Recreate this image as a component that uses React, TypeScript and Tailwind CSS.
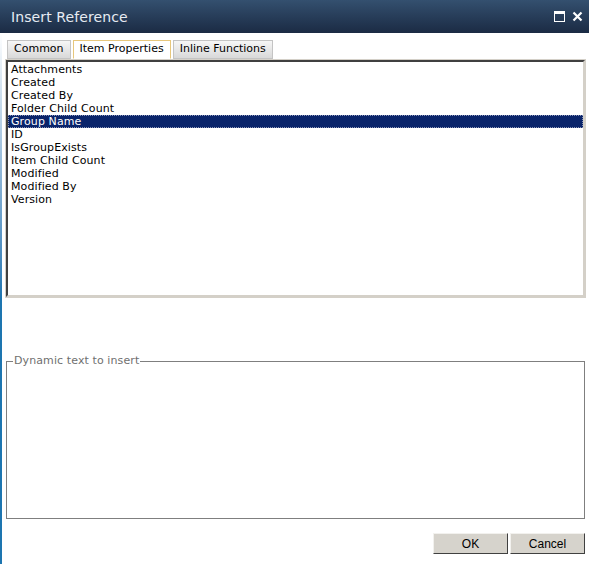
import React from "react";

const fields = [
  "Attachments",
  "Created",
  "Created By",
  "Folder Child Count",
  "Group Name",
  "ID",
  "IsGroupExists",
  "Item Child Count",
  "Modified",
  "Modified By",
  "Version",
];

const tabs = ["Common", "Item Properties", "Inline Functions"];

export default function App() {
  const selected = "Group Name";
  const activeTab = "Item Properties";

  return (
    <div className="w-[589px] h-[564px] flex flex-col bg-white overflow-hidden font-['DejaVu_Sans',sans-serif]">
      {/* title bar */}
      <div className="h-[33px] flex items-center justify-between pl-[11px] pr-[6px] bg-gradient-to-b from-[#34506f] to-[#1b2b44]">
        <span className="text-[14px] text-[#e6ebf2] tracking-[0.1px] mt-[2px]">Insert Reference</span>
        <div className="flex items-center gap-[7px]">
          <svg width="11" height="11" viewBox="0 0 11 11">
            <rect x="0.5" y="0.5" width="10" height="10" fill="none" stroke="#fff" strokeWidth="1" />
            <rect x="1" y="1" width="9" height="2" fill="#fff" />
          </svg>
          <svg width="11" height="11" viewBox="0 0 11 11">
            <path d="M1.5 1.5 L9.5 9.5 M9.5 1.5 L1.5 9.5" stroke="#fff" strokeWidth="2.2" />
          </svg>
        </div>
      </div>

      <div className="flex-1 flex">
        <div className="w-[2px] bg-gradient-to-b from-white via-[#1d75b0] to-[#1d75b0]" />
        <div className="flex-1 flex flex-col pl-[4px] pr-[4px]">
          {/* tabs */}
          <div className="flex gap-[2px] mt-[7px] pl-[1px]">
            {tabs.map((tab) => (
              <div
                key={tab}
                className={`h-[19px] flex items-center px-[6px] text-[11px] text-black border ${
                  tab === activeTab
                    ? "bg-white border-[#e7c77c] border-b-white"
                    : "bg-gradient-to-b from-[#f6f6f6] to-[#d9d9d9] border-[#c4c4c4]"
                }`}
              >
                {tab}
              </div>
            ))}
          </div>

          {/* field list */}
          <div className="mt-[1px] h-[237px] border-2 border-t-[#404040] border-l-[#404040] border-r-[#d4d0c8] border-b-[#d4d0c8] outline outline-1 outline-[#d4d0c8] bg-white pt-[1px]">
            {fields.map((f) => (
              <div
                key={f}
                className={`h-[13px] leading-[13px] pl-[3px] text-[11px] tracking-[0.1px] ${
                  f === selected
                    ? "bg-[#0a246a] text-white outline outline-1 outline-dotted outline-[#8a94b6] -outline-offset-1"
                    : "text-black"
                }`}
              >
                {f}
              </div>
            ))}
          </div>

          {/* dynamic text */}
          <fieldset className="mt-[58px] h-[164px] border border-[#7f7f7f] px-[6px]">
            <legend className="text-[11px] text-[#6f6f6f] px-[1px] leading-[12px] tracking-[0.1px]">
              Dynamic text to insert
            </legend>
          </fieldset>

          {/* buttons */}
          <div className="flex justify-end gap-[2px] mt-[14px] pr-[0px]">
            {["OK", "Cancel"].map((b) => (
              <button
                key={b}
                className="w-[75px] h-[21px] bg-[#d6d3cc] border border-t-[#f2f1ee] border-l-[#f2f1ee] border-r-[#404040] border-b-[#404040] text-[12px] text-black font-['Liberation_Sans',sans-serif]"
              >
                {b}
              </button>
            ))}
          </div>
        </div>
      </div>
    </div>
  );
}
